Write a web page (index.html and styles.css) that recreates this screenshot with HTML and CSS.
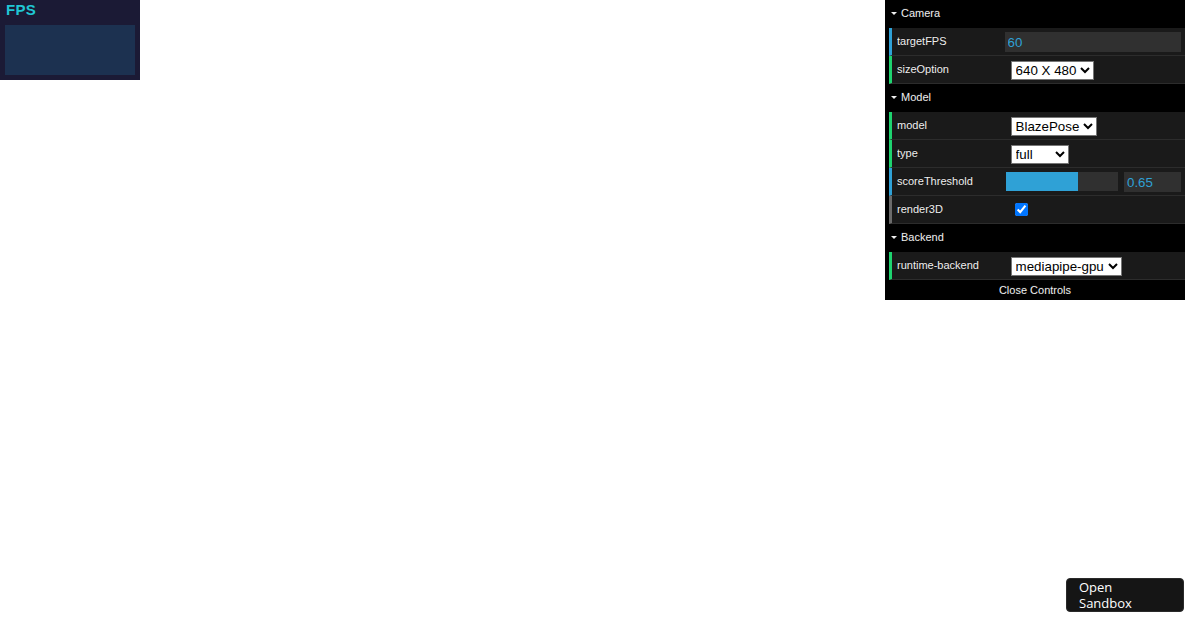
FILE: index.html
```html
<!DOCTYPE html>
<html>
<head>
<meta charset="utf-8">
<link rel="stylesheet" href="styles.css">
</head>
<body>
<div class="stats">
  <div class="stats-label">FPS</div>
  <div class="stats-graph"></div>
</div>

<div class="gui">
  <div class="folder">
    <div class="title"><span class="tri"></span>Camera</div>
    <div class="row number">
      <div class="pname">targetFPS</div>
      <div class="ctl"><input class="num full" type="text" value="60"></div>
    </div>
    <div class="row string">
      <div class="pname">sizeOption</div>
      <div class="ctl"><select class="sel"><option>640 X 480</option></select></div>
    </div>
  </div>
  <div class="folder">
    <div class="title"><span class="tri"></span>Model</div>
    <div class="row string">
      <div class="pname">model</div>
      <div class="ctl"><select class="sel"><option>BlazePose</option></select></div>
    </div>
    <div class="row string">
      <div class="pname">type</div>
      <div class="ctl"><select class="sel"><option>full</option><option>heavy</option></select></div>
    </div>
    <div class="row number">
      <div class="pname">scoreThreshold</div>
      <div class="ctl slider-ctl">
        <div class="slider"><div class="slider-fg" style="width:65%"></div></div>
        <input class="num small" type="text" value="0.65">
      </div>
    </div>
    <div class="row boolean">
      <div class="pname">render3D</div>
      <div class="ctl"><input class="chk" type="checkbox" checked></div>
    </div>
  </div>
  <div class="folder">
    <div class="title"><span class="tri"></span>Backend</div>
    <div class="row string">
      <div class="pname">runtime-backend</div>
      <div class="ctl"><select class="sel"><option>mediapipe-gpu</option></select></div>
    </div>
  </div>
  <div class="close">Close Controls</div>
</div>

<div class="sandbox">Open<br>Sandbox</div>
</body>
</html>
```

FILE: styles.css
```css
html, body {
  margin: 0;
  padding: 0;
  background: #fff;
  width: 1200px;
  height: 630px;
  overflow: hidden;
}

.stats {
  position: absolute;
  top: 0;
  left: 0;
  width: 140px;
  height: 80px;
  background: #1b1a35;
  box-sizing: border-box;
  padding: 0 5px 5px 5px;
  display: flex;
  flex-direction: column;
}
.stats-label {
  height: 25px;
  font: bold 15px/19px "Liberation Sans", Arial, sans-serif;
  color: #20c6d4;
  padding-left: 1px;
  letter-spacing: 0.3px;
}
.stats-graph {
  flex: 1;
  background: #1c3150;
}

.gui {
  position: absolute;
  top: 0;
  right: 15px;
  width: 300px;
  background: #000;
  font: 11px "Liberation Sans", Arial, sans-serif;
  color: #eee;
  text-shadow: 0 -1px 0 #111;
}

.folder {
  display: flex;
  flex-direction: column;
}

.title {
  height: 27px;
  line-height: 27px;
  border-bottom: 1px solid rgba(0,0,0,0.2);
  background: #000;
  padding-left: 16px;
  position: relative;
}
.tri {
  position: absolute;
  left: 6px;
  top: 12px;
  width: 0;
  height: 0;
  border-left: 3px solid transparent;
  border-right: 3px solid transparent;
  border-top: 3px solid #eee;
}

.row {
  display: flex;
  margin-left: 4px;
  height: 27px;
  line-height: 27px;
  border-bottom: 1px solid #2c2c2c;
  background: #1a1a1a;
  padding: 0 4px 0 5px;
  border-left: 3px solid #1ed36f;
}
.row.number { border-left-color: #2fa1d6; }
.row.string { border-left-color: #1ed36f; }
.row.boolean { border-left-color: #6b6b6b; }

.pname {
  width: 40%;
  overflow: hidden;
  white-space: nowrap;
}
.ctl {
  width: 60%;
  position: relative;
}

.num {
  display: block;
  border: 0;
  outline: none;
  background: #303030;
  color: #2fa1d6;
  font: 13.3px "Liberation Sans", Arial, sans-serif;
  height: 20px;
  padding: 0 3px;
  margin: 4px 0 0 0;
  box-sizing: border-box;
}
.num.full {
  width: 176px;
  margin-left: -6px;
}

.slider-ctl {
  display: flex;
  justify-content: space-between;
}
.slider {
  width: 112px;
  height: 19px;
  margin-top: 4px;
  margin-left: -5px;
  background: #303030;
}
.slider-fg {
  height: 100%;
  background: #2fa1d6;
}
.num.small {
  width: 57px;
}

.sel {
  margin: 5px 0 0 0;
  height: 19px;
  font: 13.33px "Liberation Sans", Arial, sans-serif;
  color: #000;
  background: #fff;
  border: 1px solid #767676;
  border-radius: 0;
  padding: 0;
  vertical-align: top;
}

.chk {
  margin: 7px 0 0 4px;
  width: 13px;
  height: 13px;
  display: block;
}

.close {
  height: 20px;
  line-height: 20px;
  text-align: center;
  background: #000;
}

.sandbox {
  position: absolute;
  left: 1066px;
  top: 578px;
  width: 118px;
  height: 34px;
  box-sizing: border-box;
  background: #151515;
  border: 1px solid #2a2a2a;
  border-radius: 4px;
  color: #fff;
  font: 13px/16px "Open Sans", "DejaVu Sans", sans-serif;
  padding: 0 0 0 12px;
}
```
